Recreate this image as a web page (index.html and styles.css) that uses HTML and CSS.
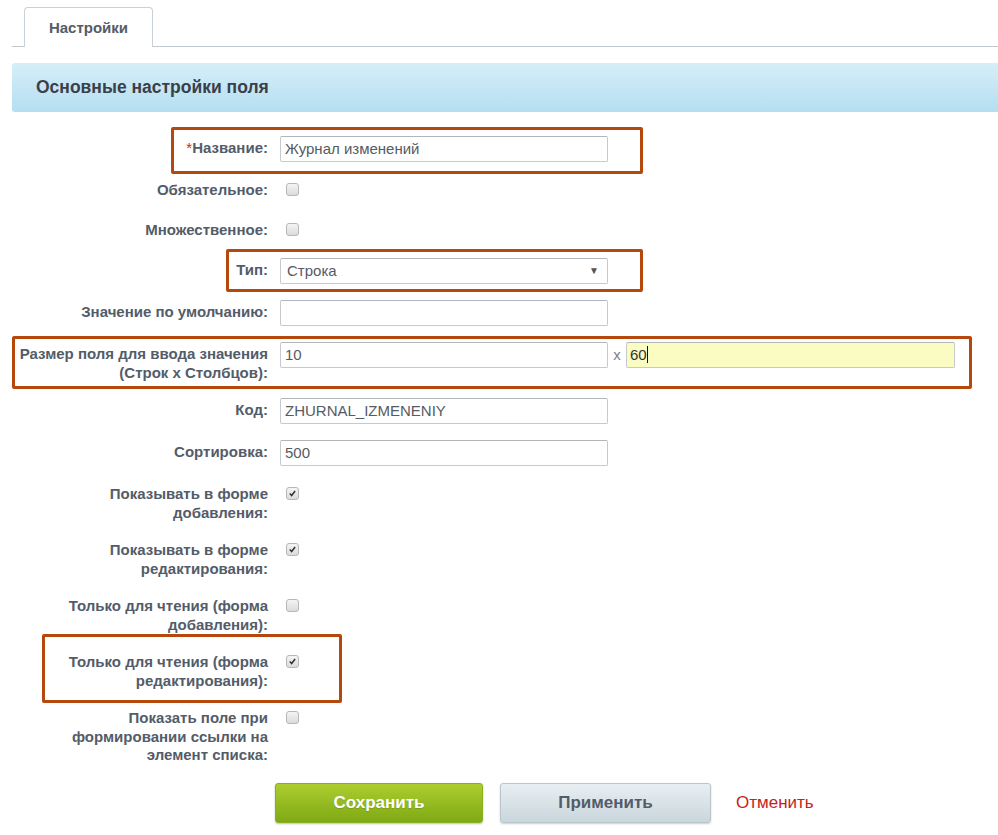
FILE: index.html
```html
<!DOCTYPE html>
<html lang="ru">
<head>
  <meta charset="UTF-8">
  <meta name="viewport" content="width=device-width, initial-scale=1.0">
  <title>Настройки поля</title>
  <link rel="stylesheet" href="styles.css">
</head>
<body>
  <div class="page">
    <div class="tabs">
      <div class="tab active">Настройки</div>
    </div>

    <div class="section-title">Основные настройки поля</div>

    <div class="form">
      <div class="row">
        <div class="label"><span class="req">*</span>Название:</div>
        <div class="field"><div class="input">Журнал изменений</div></div>
      </div>
      <div class="row">
        <div class="label">Обязательное:</div>
        <div class="field"><span class="checkbox"></span></div>
      </div>
      <div class="row">
        <div class="label">Множественное:</div>
        <div class="field"><span class="checkbox"></span></div>
      </div>
      <div class="row">
        <div class="label">Тип:</div>
        <div class="field">
          <div class="input select"><span>Строка</span><span class="arrow">&#9660;</span></div>
        </div>
      </div>
      <div class="row">
        <div class="label">Значение по умолчанию:</div>
        <div class="field"><div class="input"></div></div>
      </div>
      <div class="row">
        <div class="label">Размер поля для ввода значения<br>(Строк x Столбцов):</div>
        <div class="field size">
          <div class="input">10</div>
          <span class="times">x</span>
          <div class="input focused">60<span class="caret"></span></div>
        </div>
      </div>
      <div class="row">
        <div class="label">Код:</div>
        <div class="field"><div class="input">ZHURNAL_IZMENENIY</div></div>
      </div>
      <div class="row">
        <div class="label">Сортировка:</div>
        <div class="field"><div class="input">500</div></div>
      </div>
      <div class="row">
        <div class="label">Показывать в форме<br>добавления:</div>
        <div class="field"><span class="checkbox checked"><svg viewBox="0 0 13 13"><path d="M3.3 6.6 L5.5 8.9 L9.6 3.6" /></svg></span></div>
      </div>
      <div class="row">
        <div class="label">Показывать в форме<br>редактирования:</div>
        <div class="field"><span class="checkbox checked"><svg viewBox="0 0 13 13"><path d="M3.3 6.6 L5.5 8.9 L9.6 3.6" /></svg></span></div>
      </div>
      <div class="row">
        <div class="label">Только для чтения (форма<br>добавления):</div>
        <div class="field"><span class="checkbox"></span></div>
      </div>
      <div class="row">
        <div class="label">Только для чтения (форма<br>редактирования):</div>
        <div class="field"><span class="checkbox checked"><svg viewBox="0 0 13 13"><path d="M3.3 6.6 L5.5 8.9 L9.6 3.6" /></svg></span></div>
      </div>
      <div class="row">
        <div class="label">Показать поле при<br>формировании ссылки на<br>элемент списка:</div>
        <div class="field"><span class="checkbox"></span></div>
      </div>
    </div>

    <div class="buttons">
      <button class="btn btn-save">Сохранить</button>
      <button class="btn btn-apply">Применить</button>
      <a class="cancel" href="#">Отменить</a>
    </div>

    <!-- annotation frames -->
    <div class="mark mark-name"></div>
    <div class="mark mark-type"></div>
    <div class="mark mark-size"></div>
    <div class="mark mark-readonly"></div>
  </div>
</body>
</html>
```

FILE: styles.css
```css
html, body {
  margin: 0;
  background: #fff;
  font-family: Arial, "Liberation Sans", sans-serif;
  overflow: hidden;
}

.page {
  position: relative;
  width: 998px;
  height: 835px;
  padding-top: 7px;
  box-sizing: border-box;
}

.tabs {
  margin-left: 12px;
  padding-left: 12px;
  height: 39px;
  border-bottom: 1px solid #bfc8cf;
  display: flex;
  align-items: flex-end;
}

.tab {
  width: 129px;
  height: 40px;
  box-sizing: border-box;
  border: 1px solid #c9d1d7;
  border-bottom: none;
  border-radius: 4px 4px 0 0;
  background: #fff;
  margin-bottom: -1px;
  text-align: center;
  line-height: 39px;
  font-size: 15px;
  font-weight: bold;
  color: #535c69;
}

.section-title {
  margin: 16px 0 0 12px;
  height: 49px;
  padding-left: 24px;
  line-height: 48px;
  font-size: 17.5px;
  font-weight: bold;
  color: #3a4048;
  background: linear-gradient(to bottom, #d6eef8, #b4dff1);
  border-radius: 3px 0 0 3px;
}

.form {
  margin-top: 15px;
}

.row {
  display: grid;
  grid-template-columns: 268px 1fr;
  column-gap: 12px;
  padding: 9px 0 7px;
}

.label {
  min-height: 21px;
  padding-top: 3px;
  text-align: right;
  font-size: 15px;
  line-height: 18.5px;
  font-weight: bold;
  color: #535c69;
}

.req {
  color: #d0261b;
  font-weight: normal;
}

.field {
  display: flex;
  align-items: flex-start;
}

.input {
  width: 328px;
  height: 26px;
  box-sizing: border-box;
  border: 1px solid #c6cacf;
  border-top-color: #b1b6bb;
  border-radius: 2px;
  padding: 0 4px;
  font-size: 15px;
  line-height: 24px;
  color: #555b63;
  background: #fff;
  white-space: nowrap;
}

.select {
  display: flex;
  justify-content: space-between;
  padding-right: 8px;
  padding-left: 6px;
}

.select .arrow {
  font-size: 10px;
  color: #555;
}

.size .times {
  width: 18px;
  text-align: center;
  font-size: 15px;
  line-height: 26px;
  color: #7b8189;
}

.size .focused {
  width: 329px;
  background: #fafcc1;
  color: #333;
  padding-left: 3px;
}

.caret {
  display: inline-block;
  width: 1px;
  height: 17px;
  background: #111;
  vertical-align: -3px;
}

.checkbox {
  display: block;
  width: 13px;
  height: 13px;
  margin: 5px 0 0 6px;
  box-sizing: border-box;
  border: 1px solid #b4b8bc;
  border-radius: 3px;
  background: linear-gradient(to bottom, #f4f4f4, #dcdcdc);
}

.checkbox svg {
  display: block;
  width: 11px;
  height: 11px;
}

.checkbox path {
  fill: none;
  stroke: #333;
  stroke-width: 1.8;
}

.buttons {
  margin-top: 11px;
  padding-left: 275px;
  display: flex;
  align-items: center;
}

.btn {
  height: 40px;
  border-radius: 3px;
  font-family: Arial, "Liberation Sans", sans-serif;
  font-size: 17px;
  font-weight: bold;
  cursor: pointer;
}

.btn-save {
  width: 208px;
  border: 1px solid #8aae1d;
  color: #fff;
  background: linear-gradient(to bottom, #adcd2e, #7fa915);
  box-shadow: 0 1px 2px rgba(0, 0, 0, 0.25);
  text-shadow: 0 1px 1px rgba(0, 0, 0, 0.15);
}

.btn-apply {
  width: 211px;
  margin-left: 17px;
  border: 1px solid #b9c6cd;
  color: #535c69;
  background: linear-gradient(to bottom, #e8eff2, #c9d6dc);
  box-shadow: 0 1px 2px rgba(0, 0, 0, 0.2);
}

.cancel {
  margin-left: 25px;
  font-size: 17px;
  color: #c8201b;
  text-decoration: none;
}

.mark {
  position: absolute;
  border: 3px solid #b5480c;
  border-radius: 2px;
  box-sizing: border-box;
  pointer-events: none;
}

.mark-name { left: 171px; top: 127px; width: 472px; height: 47px; }
.mark-type { left: 226px; top: 249px; width: 417px; height: 43px; }
.mark-size { left: 12px; top: 336px; width: 960px; height: 53px; }
.mark-readonly { left: 42px; top: 634px; width: 300px; height: 69px; }
```
